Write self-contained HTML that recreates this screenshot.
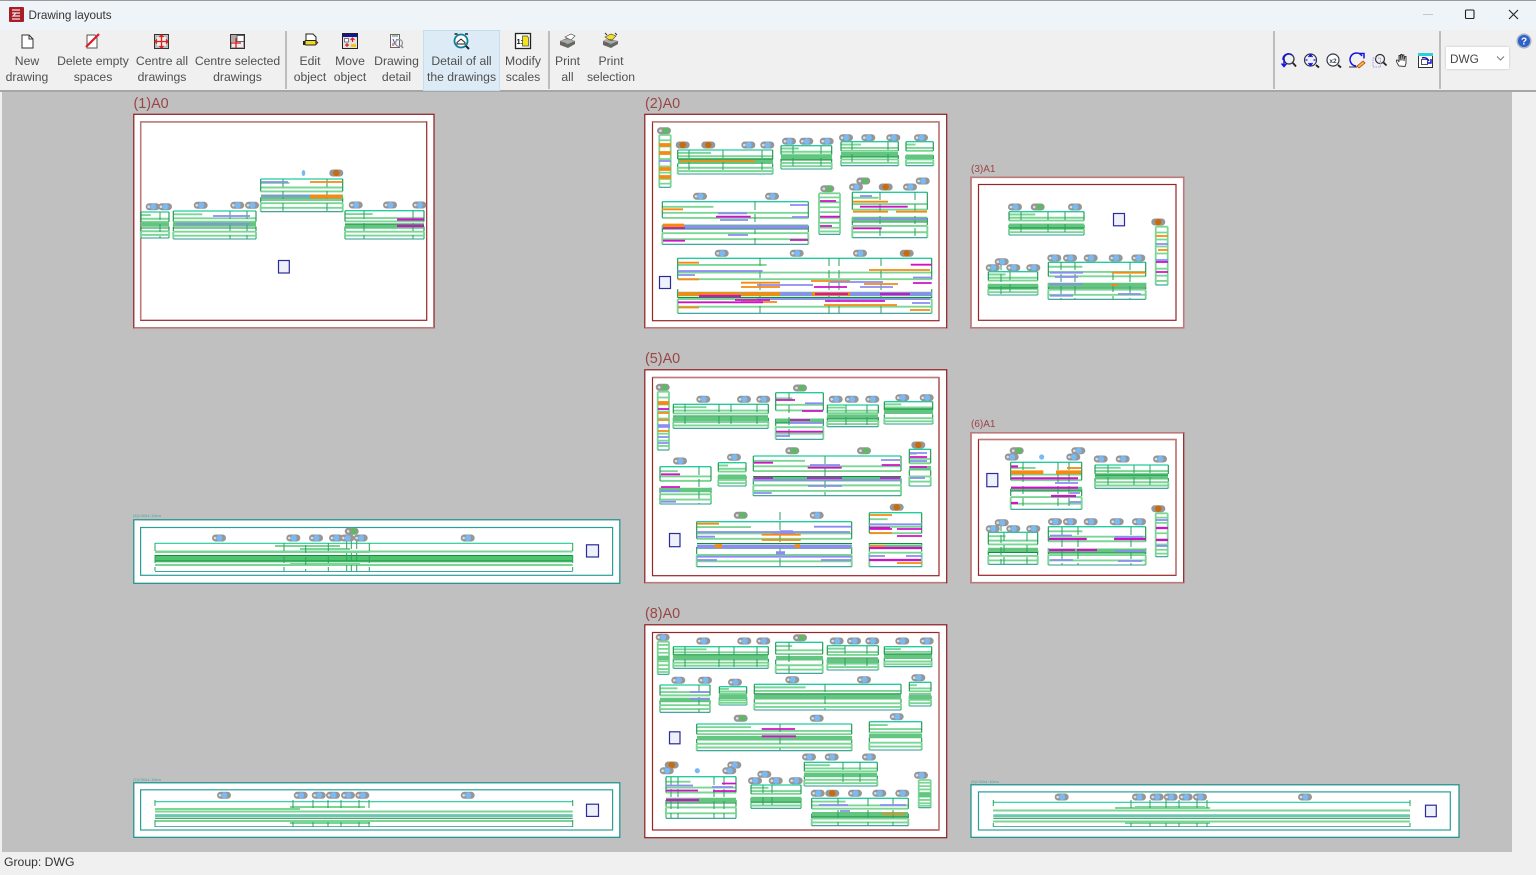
<!DOCTYPE html>
<html><head><meta charset="utf-8"><title>Drawing layouts</title>
<style>
html,body{margin:0;padding:0;width:1536px;height:875px;overflow:hidden;background:#f0f0f0;font-family:"Liberation Sans",sans-serif}
#title{position:absolute;left:0;top:0;width:1536px;height:30px;background:#eff4f9;border-top:1px solid #9a9a9a;box-sizing:border-box}
#tb{position:absolute;left:0;top:30px;width:1536px;height:60px;background:#f0f0f0;border-bottom:2px solid #a6a6a6;box-sizing:content-box}
#canvas{position:absolute;left:2px;top:92px;width:1510px;height:760px;background:#c0c0c0}
#hi{position:absolute;left:423px;top:30px;width:75px;height:59px;background:#dcebf5;border:1px solid #c4deee}
.sep{position:absolute;top:31px;width:2px;height:58px;background:#bdbdbd}
.btn{position:absolute;top:53px;font-size:12.2px;line-height:16px;color:#505050;text-align:center;white-space:nowrap;transform:translateX(-50%)}
#ttl{position:absolute;left:28.500px;top:9px;font-size:11.700px;color:#333}
#status{position:absolute;left:4px;top:855px;font-size:12.200px;color:#333}
#combo{position:absolute;left:1446px;top:47px;width:63px;height:22px;background:#fff;box-shadow:0 0 2px #bbb;font-size:11.800px;line-height:24px;color:#444;text-indent:4px}
.lab{position:absolute;color:#9a4547;font-size:14.400px;line-height:16px;white-space:nowrap}
.sm{position:absolute;color:#9a4547;font-size:10px;line-height:12px;white-space:nowrap}
.tiny{position:absolute;color:#3fa5a0;font-size:4px;line-height:5px;white-space:nowrap}
svg{position:absolute;left:0;top:0}
.R{fill:#fff;stroke:#8e1c1f;stroke-width:1.200}
.Ri{fill:#fff;stroke:#9a2326;stroke-width:1.200}
.T{fill:#fff;stroke:#16918a;stroke-width:1.200}
.Ti{fill:#fff;stroke:#2a9f98;stroke-width:1.200}
.sq{fill:#eef0fa;stroke:#2b2b9b;stroke-width:1.200}
.band{fill:none;stroke:#62c681;stroke-width:4.500}
.bd{fill:none;stroke:#0f8f3c;stroke-width:1}
.v{fill:none;stroke:#2aa25c;stroke-width:1;stroke-dasharray:8 4}
.p{fill:none;stroke:#8c8cf2;stroke-width:1.800}
.o{fill:none;stroke:#f58a12;stroke-width:1.800}
.m{fill:none;stroke:#cf12c8;stroke-width:1.800}
.g{fill:none;stroke:#7bd696;stroke-width:1.900}
.P{fill:none;stroke:#8c8cf2;stroke-width:3.600}
.O{fill:none;stroke:#f58a12;stroke-width:3.800}
.M{fill:none;stroke:#cf12c8;stroke-width:2.200}
.fade{fill:none;stroke:#bd7a7a;stroke-width:1.600}
#draw{filter:blur(.35px)}
</style></head><body>
<div id="title"></div>
<div id="tb"></div>
<div id="canvas"></div>
<div id="hi"></div>
<div class="sep" style="left:285px"></div>
<div class="sep" style="left:548px"></div>
<div class="sep" style="left:1273px"></div>
<div class="sep" style="left:1439px"></div>
<div id="ttl">Drawing layouts</div>
<div class="btn" style="left:27px">New<br>drawing</div>
<div class="btn" style="left:93px">Delete empty<br>spaces</div>
<div class="btn" style="left:162px">Centre all<br>drawings</div>
<div class="btn" style="left:237.500px">Centre selected<br>drawings</div>
<div class="btn" style="left:310px">Edit<br>object</div>
<div class="btn" style="left:350px">Move<br>object</div>
<div class="btn" style="left:396.500px">Drawing<br>detail</div>
<div class="btn" style="left:461.500px">Detail of all<br>the drawings</div>
<div class="btn" style="left:523px">Modify<br>scales</div>
<div class="btn" style="left:567.500px">Print<br>all</div>
<div class="btn" style="left:611px">Print<br>selection</div>
<div id="combo">DWG</div>
<div id="status">Group: DWG</div>

<svg width="1536" height="875" viewBox="0 0 1536 875" xmlns="http://www.w3.org/2000/svg">
<defs>
<symbol id="b" viewBox="0 0 100 100" preserveAspectRatio="none" overflow="visible">
<g fill="none">
<path vector-effect="non-scaling-stroke" stroke="#7bd696" stroke-width="1.900" d="M0 12H35M0 26H100M0 38H100M0 74H100M0 88H100M100 74V100M0 74V100"/>
<path vector-effect="non-scaling-stroke" stroke="#1fce9c" stroke-width="1.300" d="M0 0H100"/>
<path vector-effect="non-scaling-stroke" stroke="#2a9a90" stroke-width="1.100" d="M0 100H100"/>
<path vector-effect="non-scaling-stroke" stroke="#17934a" stroke-width="1.100" d="M0 0V38M100 0V38M0 56V72M100 56V72"/>
</g>
</symbol>
<symbol id="c" viewBox="0 0 100 100" preserveAspectRatio="none" overflow="visible">
<g fill="none">
<path vector-effect="non-scaling-stroke" stroke="#7bd696" stroke-width="1.800" d="M0 0H100M0 10H100M0 22H100M0 34H100M0 46H100M0 60H100M0 72H100M0 84H100M0 93H100M0 0V100M100 0V100"/>
<path vector-effect="non-scaling-stroke" stroke="#2a9a90" stroke-width="1.100" d="M0 100H100"/>
</g>
</symbol>
<g id="t"><rect x="-7" y="-3.500" width="14" height="7" rx="3.500" fill="#969696"/><circle cx=".5" r="3" fill="#79b9f6"/><circle cx="-4" r="1.300" fill="#ddd"/></g>
<g id="q"><rect x="-7" y="-3.500" width="14" height="7" rx="3.500" fill="#969696"/><circle r="3.200" fill="#c96a0c"/></g>
<g id="n"><rect x="-7" y="-3.500" width="14" height="7" rx="3.500" fill="#969696"/><circle cx="2" r="3.200" fill="#5fb964"/><circle cx="-3.500" r="1.300" fill="#ddd"/></g>
</defs>

<!-- window icon -->
<rect x="9" y="7" width="15" height="15" rx="1" fill="#a81e28"/>
<path d="M12 10h8M12 13h8M16 13l-3 3h7M12 19h8" fill="none" stroke="#f2e2e2" stroke-width="1.200"/>
<!-- window controls -->
<path d="M1423 14.500h10" stroke="#c4c8cc" stroke-width="1"/>
<rect x="1465.500" y="10" width="8.500" height="8.500" rx="1" fill="none" stroke="#222" stroke-width="1.100"/>
<path d="M1509 10l9 9M1518 10l-9 9" stroke="#222" stroke-width="1.100"/>

<!-- toolbar icons -->
<path d="M22 35h7l4 4v9H22z" fill="#fff" stroke="#333"/><path d="M29 35v4h4" fill="none" stroke="#333"/>
<path d="M87 35h8l2 3v10H87z" fill="#fff" stroke="#555"/><path d="M86 47L99 34" stroke="#e01a22" stroke-width="2.200"/>
<rect x="154.500" y="34.500" width="14" height="14" fill="#bcbcbc" stroke="#333"/><rect x="157" y="37" width="9" height="9" fill="#eee"/>
<path d="M161.500 35v13M155 41.500h13M159.500 37l2-2 2 2M159.500 46l2 2 2-2M157 39.500l-2 2 2 2M166 39.500l2 2-2 2" fill="none" stroke="#e31b1b" stroke-width="1.300"/>
<rect x="230.500" y="34.500" width="14" height="14" fill="#aaa" stroke="#333"/><rect x="237" y="35.500" width="7" height="6" fill="#fff" stroke="#333" stroke-width=".7"/><rect x="232" y="42" width="11" height="5" fill="#eee"/>
<path d="M236 38v10M231 43h10" fill="none" stroke="#e31b1b" stroke-width="1.300"/>
<path d="M306 34h7l3 3v5h-10z" fill="#fff" stroke="#222"/><rect x="305" y="40.500" width="11" height="4.500" rx="1" fill="#f0d820" stroke="#222"/><path d="M316 41l2 1.500-2 2z" fill="#d41" stroke="#222" stroke-width=".6"/><path d="M304 41v4" stroke="#222" stroke-width="2"/>
<rect x="342.500" y="33.500" width="15" height="15" fill="#e4e4e4" stroke="#222"/><rect x="343" y="34" width="14" height="3" fill="#15159a"/>
<rect x="344.500" y="38.500" width="4" height="3.500" fill="#fff" stroke="#333" stroke-width=".6"/><path d="M352.500 38v4M350.500 40l2-2 2 2M345 45h4M347 43v4" fill="none" stroke="#e31b1b" stroke-width="1.200"/><rect x="351" y="44" width="5" height="3" fill="#efc718"/>
<path d="M390.500 34.500h9v13h-9z" fill="#f6f6f6" stroke="#666"/><path d="M392 36h6" stroke="#4a8a4a"/><path d="M393 39l2 5 2-5" fill="none" stroke="#2a5ad0"/><path d="M393 43v3" stroke="#d22"/><circle cx="399" cy="43" r="3.500" fill="none" stroke="#999" stroke-width="1.300"/><path d="M401.500 46l1.500 2" stroke="#888" stroke-width="1.500"/>
<circle cx="461" cy="41" r="6.500" fill="#fff" stroke="#0e7f9a" stroke-width="1.800"/><path d="M457 42.500l4-3.500 4 3.500v1.500h-8z" fill="#fff" stroke="#222"/><path d="M454.500 34h3M465 34h3" stroke="#222" stroke-width="1.500"/><path d="M466 46l3 3" stroke="#222" stroke-width="2"/>
<rect x="515.500" y="33.500" width="15" height="15" fill="#fff" stroke="#222" stroke-width="1.300"/><path d="M522.500 36h5l1 2v8h-6z" fill="#f5e11c" stroke="#444" stroke-width=".7"/><text x="516.500" y="44" font-family="Liberation Sans" font-size="7.500" font-weight="bold" fill="#111">1:</text>
<path d="M565 37l6-3 4 2-4 4z" fill="#fff" stroke="#444" stroke-width=".6"/><path d="M560 41l7-3 8 3v3l-7 4-8-3z" fill="#666"/><path d="M560 41l8 3 7-3-8-2z" fill="#aaa"/><circle cx="564" cy="43.500" r=".8" fill="#d22"/><circle cx="567" cy="44.500" r=".8" fill="#2a2"/>
<path d="M605 37l6-3 5 2-5 5z" fill="#f3e21e" stroke="#444" stroke-width=".6"/><path d="M603 41l7-2 8 2v3l-7 4-8-3z" fill="#666"/><path d="M603 41l8 3 7-3-3-1-4 1-5-2z" fill="#aaa"/><circle cx="607" cy="43.500" r=".8" fill="#d22"/><circle cx="610" cy="44.500" r=".8" fill="#2a2"/><path d="M605 33l2 2M615 33l2 2" stroke="#333"/>

<!-- right icons -->
<g fill="none">
<circle cx="1289" cy="59" r="5" stroke="#334" stroke-width="1.300"/><path d="M1293 63l3 3.500" stroke="#222" stroke-width="1.800"/><path d="M1283 60c-.5-5 5-8 9-5M1284 59v7M1281.500 63.500l2.500 3 2.500-3" stroke="#1414e0" stroke-width="1.500"/>
<circle cx="1310.500" cy="60" r="6" fill="#eef" stroke="#334" stroke-width="1.200"/><path d="M1316 65l3 2.500" stroke="#222" stroke-width="1.800"/><path d="M1310.500 55v2M1310.500 63v2M1305.500 60h2M1313.500 60h2M1308.500 57l2-2.500 2 2.500M1308.500 63l2 2.500 2-2.500" stroke="#1414e0" stroke-width="1.300"/>
<circle cx="1333" cy="60" r="6" fill="#fff" stroke="#334" stroke-width="1.200"/><path d="M1338 65l3 2.500" stroke="#222" stroke-width="1.800"/>
<path d="M1362 56a6.500 6.500 0 1 0-6 10" stroke="#1414e0" stroke-width="1.500"/><path d="M1359 53.500h5v5" stroke="#1414e0" stroke-width="1.500"/><path d="M1349 67h8" stroke="#333"/><path d="M1357 66l6-5 2 2-6 5z" fill="#f0c020" stroke="#b33" stroke-width=".8"/>
<circle cx="1380" cy="59" r="4.500" stroke="#333" stroke-width="1.200"/><path d="M1383.500 62.500l3 3" stroke="#222" stroke-width="1.800"/><rect x="1373" y="58" width="7.500" height="9" stroke="#9a9af0" stroke-dasharray="1.500 1"/>
<path d="M1399 66c-2-3-3-5-2.500-6 1-.5 2 1 2.500 2l0-6.500h1.200v5l.5-6h1.200v6l.8-5.500h1.200v6l1-4.500h1.100v7l-1 3z" fill="#fff" stroke="#333" stroke-width=".9"/>
<rect x="1418.500" y="53.500" width="14" height="14" fill="#fff" stroke="#333"/><rect x="1418" y="53" width="15" height="3" fill="#2bd0d8"/><rect x="1421.500" y="59.500" width="6" height="5" stroke="#555"/><path d="M1422 58c3-1 5 0 7 3M1431 59v4h-4" stroke="#1414d0" stroke-width="1.500"/>
</g>
<text x="1333" y="63" text-anchor="middle" font-family="Liberation Sans" font-size="6.500" font-weight="bold" fill="#345">x2</text>
<path d="M1497 56.500l3.500 3.500 3.500-3.500" fill="none" stroke="#777"/>
<!-- help -->
<circle cx="1524" cy="41" r="6.800" fill="#2d62c8" stroke="#a9b4c4" stroke-width="1.500"/>
<text x="1524" y="44.500" text-anchor="middle" font-family="Liberation Sans" font-size="10" font-weight="bold" fill="#fff">?</text>

<g id="draw">
<!-- sheet 1 -->
<rect class="R" x="133.800" y="114.300" width="300.200" height="213.500"/>
<rect class="Ri" x="140.700" y="121.900" width="286" height="198.400"/>
<path class="fade" d="M134 327.800H434M140.700 320V122H426"/>
<use href="#b" x="141" y="212" width="28" height="26"/>
<use href="#b" x="173.300" y="211" width="82.700" height="28"/>
<use href="#b" x="260.700" y="179" width="82" height="32.700"/>
<use href="#b" x="345" y="210.700" width="79" height="28.300"/>
<path class="band" d="M141 224.500H169M173 224.500H256M261 196.700H343M345 226.500H424"/>
<path class="bd" d="M141 228H169M173 228H256M261 200H343M345 224H424"/>
<path class="v" d="M160 212V238M230 211V239M247 211V239M283 179V211M327 179V211M364 211V239M413 211V239"/>
<path class="p" d="M213 216H250M177 224H250M261 196H310M261 182H288"/>
<path class="O" d="M310 196.500H342"/><path class="o" d="M310 182H342"/>
<path class="M" d="M397 219.500H424M397 226H424"/>
<use href="#t" x="152.700" y="206.700"/><use href="#t" x="165" y="206.700"/><use href="#t" x="200.700" y="205.300"/><use href="#t" x="237.300" y="205.300"/><use href="#t" x="252" y="205.300"/>
<ellipse cx="303.500" cy="173" rx="1.800" ry="3" fill="#79b9f6"/><use href="#q" x="336.300" y="173"/><use href="#t" x="355.700" y="205"/><use href="#t" x="390" y="205"/><use href="#t" x="419.300" y="205"/>
<rect class="sq" x="278.500" y="260.500" width="10.800" height="12.500"/>

<!-- sheet 2 -->
<rect class="R" x="644.800" y="114.300" width="301.900" height="213.500"/>
<rect class="Ri" x="652.500" y="121.900" width="286.500" height="198.800"/>
<path class="fade" d="M645 327.800H946M652.500 122H939V320"/>
<use href="#c" x="659.300" y="135" width="11.400" height="52.300"/>
<path class="O" d="M659 145H671M659 153H671M659 169H671M659 177H671"/><path class="p" d="M659 161H671"/>
<use href="#n" x="664" y="130.700"/>
<use href="#b" x="677.700" y="150" width="95" height="24"/>
<use href="#b" x="781" y="145.700" width="50.700" height="23.300"/>
<use href="#b" x="841" y="141.700" width="57.300" height="24"/>
<use href="#b" x="906" y="141.700" width="27.300" height="24"/>
<use href="#b" x="662.300" y="201.700" width="146" height="42.600"/>
<use href="#c" x="819" y="193.300" width="21" height="41"/>
<use href="#b" x="852.300" y="192.300" width="75" height="45.400"/>
<use href="#b" x="677.700" y="258.300" width="254" height="55"/>
<path class="band" d="M678 161.700H773M781 157.300H832M841 154.300H898M906 156.700H933M662 226.700H808M852 219H927M678 294H932"/>
<path class="bd" d="M678 159H773M781 160H832M841 157H898M662 229H808M852 222H927M678 297.500H932"/>
<path class="v" d="M689 150V174M723 150V174M762 150V174M793 146V169M821 146V169M852 142V166M888 142V166M755 202V244M880 192V238M915 192V238M760 258V313M829 258V313M839 258V313M881 258V313"/>
<path class="o" d="M680 161H755M662 209.300H683M853 201.700H888M853 211.700H888M896 211.700H927M678 262.700H699M678 279.300H699M869 270H930M741 282.700H780M741 287H780M811 281H850M864 284H898M741 302H777M824 305H897M678 307.500H699M910 310H930"/>
<path class="O" d="M663 225.500H684M678 294H740M741 294H780M812 294H850"/>
<path class="p" d="M718 213.300H747M720 220H748M790 205H808M792 217H808M860 196H872M854 219H927M678 271H762.700M678 275H695M913 277.500H932M757 285H813M830 282H883M860 287H893M757 299H930M912 303H930M728 235H748"/>
<path class="P" d="M684 227H808M780 294H812M850 294H932"/>
<path class="m" d="M716 216.700H750.700M663 228H685M663 240.700H685M790 240H808M820 201H836M820 216.700H840M820 226H832M860 206.700H907.700M853 228.300H881.700M910.700 264.700H931.700M913 283H931.700M814 287H847M678 302.300H763M735 300H770M825 301H885"/>
<path class="M" d="M699 296H741M815 294H848M880 294H910"/>
<use href="#q" x="682.700" y="145"/><use href="#q" x="708.300" y="145"/><use href="#t" x="748.300" y="145"/><use href="#t" x="767.300" y="145"/><use href="#t" x="789" y="141.300"/><use href="#t" x="806.300" y="141.300"/><use href="#t" x="826.700" y="141.300"/><use href="#t" x="846" y="137.700"/><use href="#t" x="868.300" y="137.700"/><use href="#t" x="893.300" y="137.700"/><use href="#t" x="921" y="137.700"/>
<use href="#t" x="700" y="196.300"/><use href="#t" x="772" y="196.300"/><use href="#n" x="827.300" y="188.700"/><use href="#n" x="863.300" y="181"/><use href="#t" x="922.700" y="181"/><use href="#t" x="856" y="187"/><use href="#q" x="885.700" y="187"/><use href="#t" x="910" y="187"/>
<use href="#t" x="721.700" y="253.300"/><use href="#t" x="796.700" y="253.300"/><use href="#t" x="860" y="253.300"/><use href="#q" x="906.700" y="253.300"/>
<rect class="sq" x="659.500" y="276.500" width="11" height="12"/>

<!-- sheet 3 -->
<rect class="R" x="971" y="177.300" width="212.700" height="150.500"/>
<rect class="Ri" x="978.500" y="184.500" width="197.500" height="135.800"/>
<path class="fade" d="M971 327.800V177.300H1183.700V327.800H971"/>
<use href="#b" x="1009" y="211.700" width="75" height="23.300"/>
<use href="#c" x="1155.700" y="226.700" width="12" height="58.300"/>
<use href="#b" x="988.300" y="271.700" width="49.400" height="23.300"/>
<use href="#b" x="1048.300" y="262.300" width="97.400" height="37"/>
<path class="band" d="M1009 225.700H1084M988 286H1038M1048 285H1146"/>
<path class="bd" d="M1009 228H1084M988 288H1038M1048 288H1146"/>
<path class="v" d="M1021 212V235M1048 212V235M1065 212V235M1001 262V295M1010 272V295M1061 262V299M1075 262V299M1113 272V299M1130 262V299"/>
<path class="o" d="M1156 236H1168M1158 250H1168"/><path class="m" d="M1156 262H1168M1156 272H1168"/><path class="p" d="M1156 244H1168M1156 260H1168"/>
<path class="o" d="M1111.700 272.700H1145.700M1111 285H1118"/>
<path class="p" d="M1050 272.700H1083M1055 277H1078M1050 284H1083M1118 294H1141M1050 295.700H1073"/>
<use href="#t" x="1015" y="207"/><use href="#n" x="1037.700" y="207"/><use href="#t" x="1075" y="207"/><use href="#q" x="1158.300" y="222"/><use href="#t" x="1001.700" y="261.700"/><use href="#t" x="992.700" y="267.700"/><use href="#t" x="1013.300" y="267.700"/><use href="#t" x="1033.300" y="267.700"/>
<use href="#t" x="1054.300" y="258"/><use href="#t" x="1070" y="258"/><use href="#t" x="1090.700" y="258"/><use href="#t" x="1115.700" y="258"/><use href="#t" x="1138.300" y="258"/>
<rect class="sq" x="1113.500" y="213.500" width="11" height="12.300"/>

<!-- long 4 -->
<rect class="T" x="133.800" y="519.800" width="486" height="63.500"/>
<rect class="Ti" x="140.600" y="527.500" width="472" height="47.800"/>
<path d="M155 543.300H572.700" stroke="#1fce9c" stroke-width="1.200"/>
<path class="g" d="M275 546H340M155 552H370M300 549H350M290 564H360M155 565H572.700M155 551.500H572.700M155 561.500H572.700"/>
<path d="M155 571.500H572.700" stroke="#3aa79e" stroke-width="1.100"/>
<path d="M155 558.300H572.700" stroke="#4fc46f" stroke-width="5"/><path d="M155 555.500H572.700M155 561H572.700" stroke="#0f8f3c" stroke-width=".9"/>
<path class="v" d="M155 543V571M572.700 543V571M284 543V571M305.700 545V571M328.300 543V571M346.700 541V571M351.300 541V571M356.700 541V571M369.300 543V571"/>
<use href="#t" x="219" y="538"/><use href="#t" x="293.300" y="538"/><use href="#t" x="316" y="538"/><use href="#t" x="336" y="538"/><use href="#t" x="347.300" y="538"/><use href="#t" x="360.700" y="538"/><use href="#t" x="467.700" y="538"/><use href="#n" x="351.700" y="531.300"/>
<rect class="sq" x="586.500" y="544.800" width="12" height="12.200"/>

<!-- sheet 5 -->
<rect class="R" x="644.800" y="369.800" width="301.900" height="212.900"/>
<rect class="Ri" x="652.500" y="377.500" width="286.500" height="198.200"/>
<path class="fade" d="M652.500 377.500H939M645 582.700H946"/>
<use href="#c" x="657.700" y="391.700" width="11.300" height="58.300"/>
<path class="O" d="M658 403H669"/><path class="o" d="M658 413H669M658 420H669M658 431H669"/><path class="m" d="M658 409H669"/><path class="P" d="M658 426H670"/><path class="p" d="M658 437H669M658 443H669"/>
<use href="#b" x="673.300" y="404.300" width="95" height="24"/>
<use href="#b" x="775.700" y="392.700" width="47.600" height="46.600"/>
<use href="#b" x="827.300" y="405" width="51" height="21.700"/>
<use href="#b" x="884.300" y="401.700" width="48.400" height="22.300"/>
<use href="#b" x="660" y="466.700" width="51" height="37.300"/>
<use href="#b" x="718.300" y="462.700" width="27.700" height="23.300"/>
<use href="#b" x="753.300" y="456" width="147.700" height="39.700"/>
<use href="#b" x="909.300" y="449.300" width="21.400" height="36.700"/>
<use href="#b" x="696.700" y="521.700" width="155" height="45"/>
<use href="#b" x="869.300" y="512.700" width="52.400" height="54"/>
<path class="band" d="M673 419H768M776 420.700H823M827 416.700H878M884 411.700H933M660 490H711M718 476.700H746M753 479.300H901M909 468.300H931M697 546.700H852M869 546.700H922"/>
<path class="bd" d="M673 416H768M776 423H823M827 419H878M884 409H933M753 476.500H901M697 543.500H852M869 543.500H922"/>
<path class="v" d="M685 404V428M719 404V428M731 404V428M757 404V428M789 393V439M846 405V427M867 405V427M699 467V504M825 456V496M780 522V566M780 512V522"/>
<path class="m" d="M776 400H795M802 411H823M790 420H810M776 431.700H823M661 474.300H680M661 487H680M754 462.700H773M881.700 465H900M807.700 467.700H841.700M754 478H773M807 478H842M880 478H900M910 457H927M910 467H927M870 529H892M897 529H922M897 536H922"/>
<path class="M" d="M869 528H890M869 548H922M869 560H921"/>
<path class="p" d="M805 403.300H823M776 436H790M790 423H823M661 491H680M661 501.700H676M810 465H840M881 460H900M753 480H901M808 486H842M754 493H771.700M910 453H927M910 461H927M910 478H925M697 532H850M697 536.700H715M814 526.700H851.700M697 556.700H851.700M697 560H717M821 560H851M772 534H795M869 524.300H922M869 556H885M906 556H922"/>
<path class="P" d="M697 546.700H851M776 553H785M780 532H793"/>
<path class="o" d="M697 523.700H719M761.700 534.700H800.700M761.700 540H800.700M870 515H892M870 533H892M870 546H885M897 563H922"/><path class="O" d="M715 546H722M795 546H800"/>
<use href="#n" x="662.700" y="387.300"/><use href="#t" x="703.300" y="399.300"/><use href="#t" x="744" y="399.300"/><use href="#t" x="763.300" y="399.300"/><use href="#n" x="800" y="388"/><use href="#t" x="835.700" y="399.300"/><use href="#t" x="851.700" y="399.300"/><use href="#t" x="872.300" y="399.300"/><use href="#t" x="902.300" y="397.700"/><use href="#t" x="926.700" y="397.700"/><use href="#t" x="680" y="461"/><use href="#t" x="734" y="457.300"/><use href="#n" x="792.300" y="450.700"/><use href="#n" x="864" y="450.700"/><use href="#q" x="918.300" y="445"/><use href="#n" x="740.700" y="515.300"/><use href="#t" x="816.700" y="515.300"/><use href="#q" x="896.700" y="507.300"/>
<rect class="sq" x="669.500" y="533.500" width="10.500" height="13.200"/>

<!-- sheet 6 -->
<rect class="R" x="971" y="432.800" width="212.700" height="149.900"/>
<rect class="Ri" x="978.500" y="439.500" width="197.500" height="135.800"/>
<path class="fade" d="M971 582.700V432.800H1183.700M971 582.700H1183.700M978.500 439.500H1176V575"/>
<use href="#b" x="1010.700" y="462.300" width="71" height="47"/>
<use href="#b" x="1095" y="465" width="73.300" height="23.300"/>
<use href="#c" x="1155.700" y="513.300" width="12" height="43.400"/>
<use href="#b" x="988.300" y="532.300" width="49.400" height="32"/>
<use href="#b" x="1048.300" y="526.700" width="97.400" height="38.300"/>
<path class="band" d="M1011 489H1082M1095 477.300H1168M988 550H1038M1048 550.700H1146"/>
<path class="bd" d="M1095 475H1168M1011 491H1082M988 552.500H1038M1048 553H1146"/>
<path class="v" d="M1023 462V509M1058 462V509M1069 462V509M1108 465V488M1134 465V488M1150 465V488M1001 523V564M1004 533V564M1027 533V564M1062 527V565M1078 527V565M1131 527V565"/>
<path class="O" d="M1011 472.300H1043.300M1056 472.300H1081"/><path class="o" d="M1067 468H1081"/>
<path class="M" d="M1011 478.300H1078M1011 487.700H1078M1051 496H1076M1011 466.500H1018M1011 503H1018M1156 528H1168M1156 540H1168M1049 539H1086.700M1114 539H1145.700M1049 550H1075M1077 550H1097"/>
<path class="p" d="M1055 483H1078M1070 493H1080M1069 502H1081M1050 535.500H1072M1115 537H1143M1115 551H1145M1050 560H1073M1118 561H1142M1156 520H1168M1156 546H1168"/>
<use href="#n" x="1016.700" y="450.700"/><use href="#t" x="1078.300" y="450.700"/><use href="#t" x="1011.700" y="457"/><circle cx="1041.700" cy="457" r="2.600" fill="#79b9f6"/><use href="#t" x="1073.300" y="457"/><use href="#t" x="1100.700" y="459"/><use href="#t" x="1122.700" y="459"/><use href="#t" x="1160" y="459"/><use href="#q" x="1158.300" y="508.700"/><use href="#t" x="1001.700" y="522.700"/><use href="#t" x="992.700" y="528.700"/><use href="#t" x="1013.300" y="528.700"/><use href="#t" x="1033.300" y="528.700"/><use href="#t" x="1055" y="521.700"/><use href="#t" x="1070" y="521.700"/><use href="#t" x="1090.700" y="521.700"/><use href="#t" x="1116.700" y="521.700"/><use href="#t" x="1139" y="521.700"/>
<rect class="sq" x="986.800" y="473.500" width="11" height="13.200"/>

<!-- sheet 8 -->
<rect class="R" x="644.800" y="624.800" width="301.900" height="212.900"/>
<rect class="Ri" x="652.500" y="632.500" width="286.500" height="197.500"/>
<path class="fade" d="M939 632.500V830"/>
<use href="#c" x="657.700" y="641.700" width="11.300" height="32.600"/>
<use href="#b" x="673.300" y="646.700" width="95" height="21.600"/>
<use href="#b" x="775.700" y="642.300" width="47" height="31"/>
<use href="#b" x="827.300" y="645.700" width="51" height="24.300"/>
<use href="#b" x="884.300" y="646.700" width="47.400" height="20"/>
<use href="#b" x="660" y="685" width="50" height="27.300"/>
<use href="#b" x="719.300" y="686.700" width="27.400" height="18.300"/>
<use href="#b" x="754.300" y="684.300" width="146.700" height="25.700"/>
<use href="#b" x="909.300" y="682.300" width="21.700" height="23.700"/>
<use href="#b" x="696.700" y="724" width="155" height="26.700"/>
<use href="#b" x="869.300" y="721.700" width="52.400" height="28.300"/>
<use href="#b" x="666" y="776.700" width="70" height="41.600"/>
<use href="#b" x="751" y="785" width="50" height="23.300"/>
<use href="#b" x="804.300" y="762.300" width="73" height="23.700"/>
<use href="#b" x="811.700" y="798.300" width="96.600" height="27.400"/>
<use href="#c" x="918.700" y="780" width="12" height="27.700"/>
<path class="band" d="M658 658H669M673 658.300H768M776 658.300H823M827 661H878M884 656.700H932M660 700H710M719 696.700H747M754 697.300H901M909 697.300H931M697 738.300H852M869 736H922M666 800H736M751 799H801M804 775H877M812 814.300H908M919 795H931"/>
<path class="bd" d="M673 655H768M827 658H878M884 654H932M754 694H901M909 694H931M666 803H736M751 802H801M812 817H908"/>
<path class="v" d="M685 647V668M719 647V668M734 647V668M757 647V668M789 642V673M845 646V670M867 646V670M699 685V712M825 684V710M780 724V751M671 777V818M678 777V818M714 777V818M724 777V818M763 785V808M772 785V808M843 762V786M860 762V786M838 798V826M868 798V826M893 798V826"/>
<path class="p" d="M690 692H709M690 699H709M666 785.500H693M712 787H733M819 805H848M880 805H906M840 811H850"/>
<path class="m" d="M761.700 729H795M761.700 736.300H796M666 790.500H698M713 791H736M722 783.500H736"/>
<path class="M" d="M666 800H699"/><path class="o" d="M882 814H905"/>
<use href="#t" x="662.700" y="637.300"/><use href="#t" x="703.300" y="641"/><use href="#t" x="744.300" y="641"/><use href="#t" x="763.300" y="641"/><use href="#n" x="800" y="637.700"/><use href="#t" x="836.700" y="641"/><use href="#t" x="854" y="641"/><use href="#t" x="872.300" y="641"/><use href="#t" x="902.300" y="641"/><use href="#t" x="926.700" y="641"/><use href="#t" x="678.300" y="680.300"/><use href="#t" x="705" y="680.300"/><use href="#t" x="735" y="682.300"/><use href="#t" x="792.300" y="679.700"/><use href="#t" x="864" y="679.700"/><use href="#t" x="918.300" y="677.700"/><use href="#n" x="740.700" y="718.300"/><use href="#t" x="816.700" y="718.300"/><use href="#t" x="896.700" y="716.700"/>
<use href="#q" x="671.700" y="765"/><use href="#t" x="734.300" y="765"/><use href="#t" x="666.700" y="770.700"/><circle cx="697.300" cy="770.700" r="2.600" fill="#79b9f6"/><use href="#t" x="729.300" y="770.700"/><use href="#t" x="764.300" y="774.300"/><use href="#t" x="755" y="780.700"/><use href="#t" x="775.700" y="780.700"/><use href="#t" x="795.700" y="780.700"/><use href="#t" x="809" y="757"/><use href="#t" x="831.700" y="757"/><use href="#t" x="869" y="757"/><use href="#t" x="817.700" y="793.300"/><use href="#q" x="832.300" y="793.300"/><use href="#t" x="855" y="793.300"/><use href="#t" x="879.300" y="793.300"/><use href="#t" x="902.300" y="793.300"/><use href="#t" x="921" y="775.300"/>
<rect class="sq" x="669.500" y="731.800" width="10.500" height="12"/>

<!-- long bottom left -->
<rect class="T" x="133.800" y="782.800" width="486" height="54.500"/>
<rect class="Ti" x="140.600" y="789.800" width="472" height="40.200"/>
<path d="M155 801.700H572.700" stroke="#1fce9c" stroke-width="1.200"/>
<path class="g" d="M155 809H300M155 811.500H572.700M290 807H365M155 821H572.700M290 823H370"/>
<path d="M155 815.700H572.700" stroke="#6fc6b0" stroke-width="3.200"/><path d="M155 818.300H572.700" stroke="#0f8f3c" stroke-width=".9"/>
<path d="M155 826.500H572.700" stroke="#5fb0a8" stroke-width="1"/>
<path class="v" d="M155 800V806M572.700 800V806M293 800V808M313 800V808M328 800V808M341 800V808M359 800V808M369 800V808M155 820V827M572.700 820V827M293 822V827M313 822V827M328 822V827M341 822V827M359 822V827M369 822V827"/>
<use href="#t" x="224" y="795.300"/><use href="#t" x="300.700" y="795.300"/><use href="#t" x="318.700" y="795.300"/><use href="#t" x="333" y="795.300"/><use href="#t" x="348" y="795.300"/><use href="#t" x="362.300" y="795.300"/><use href="#t" x="467.700" y="795.300"/>
<rect class="sq" x="586.500" y="804.200" width="12" height="12.200"/>

<!-- long bottom right -->
<rect class="T" x="971" y="784.800" width="488" height="52.500"/>
<rect class="Ti" x="978.500" y="791.900" width="471.800" height="38.100"/>
<path d="M993.300 802.300H1410" stroke="#1fce9c" stroke-width="1.200"/>
<path class="g" d="M1115 808H1210M993 810.500H1410M1135 807H1205M993 821.500H1410M1125 823H1210"/>
<path d="M993.300 815.700H1410" stroke="#6fc6b0" stroke-width="3"/><path d="M993.300 818.300H1410" stroke="#0f8f3c" stroke-width=".9"/>
<path d="M993.300 826.500H1410" stroke="#5fb0a8" stroke-width="1"/>
<path class="v" d="M993.300 800V806M1410 800V806M1131 800V808M1150 800V808M1166 800V808M1179 800V808M1197 800V808M1207 800V808M993.300 823V827M1410 823V827M1131 823V827M1150 823V827M1166 823V827M1179 823V827M1197 823V827M1207 823V827"/>
<use href="#t" x="1061.700" y="797"/><use href="#t" x="1139" y="797"/><use href="#t" x="1156.700" y="797"/><use href="#t" x="1170.700" y="797"/><use href="#t" x="1185.700" y="797"/><use href="#t" x="1200" y="797"/><use href="#t" x="1305" y="797"/>
<rect class="sq" x="1425.500" y="805.200" width="10.800" height="11.500"/>
</g>
</svg>

<div class="lab" style="left:133.500px;top:96px">(1)A0</div>
<div class="lab" style="left:645px;top:96px">(2)A0</div>
<div class="sm" style="left:971px;top:164px">(3)A1</div>
<div class="lab" style="left:645px;top:351px">(5)A0</div>
<div class="sm" style="left:971px;top:419px">(6)A1</div>
<div class="lab" style="left:645px;top:606px">(8)A0</div>
<div class="tiny" style="left:133px;top:513px">(4)1:50x1:10cm</div>
<div class="tiny" style="left:133px;top:777px">(7)1:50x1:10cm</div>
<div class="tiny" style="left:971px;top:779px">(9)1:50x1:10cm</div>
</body></html>
